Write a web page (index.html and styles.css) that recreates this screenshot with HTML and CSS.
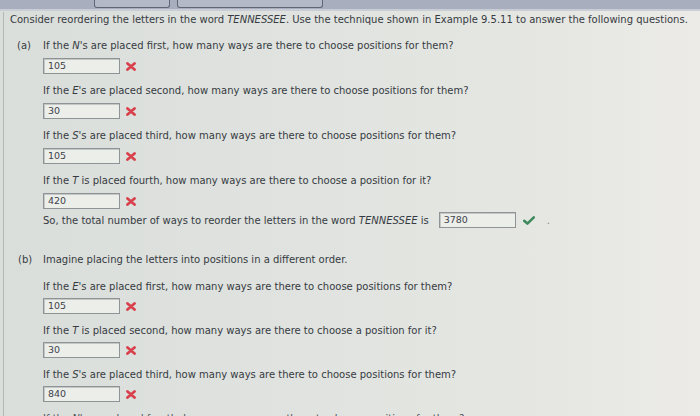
FILE: index.html
```html
<!DOCTYPE html>
<html>
<head>
<meta charset="utf-8">
<link rel="stylesheet" href="styles.css">
</head>
<body>
<div class="topbar"><span class="tbtn tb1"></span><span class="tbtn tb2"></span></div>
<div class="page">
  <p class="intro">Consider reordering the letters in the word <i>TENNESSEE</i>. Use the technique shown in Example 9.5.11 to answer the following questions.</p>

  <div class="part part-a">
    <span class="label">(a)</span>
    <div class="body">
      <p class="qt first">If the <i>N</i>'s are placed first, how many ways are there to choose positions for them?</p>
      <div class="ans"><span class="box">105</span><svg class="x" viewBox="0 0 10 9"><path d="M1.5 1.5 L8.5 7.5 M8.5 1.5 L1.5 7.5"/></svg></div>
      <p class="qt">If the <i>E</i>'s are placed second, how many ways are there to choose positions for them?</p>
      <div class="ans"><span class="box">30</span><svg class="x" viewBox="0 0 10 9"><path d="M1.5 1.5 L8.5 7.5 M8.5 1.5 L1.5 7.5"/></svg></div>
      <p class="qt">If the <i>S</i>'s are placed third, how many ways are there to choose positions for them?</p>
      <div class="ans"><span class="box">105</span><svg class="x" viewBox="0 0 10 9"><path d="M1.5 1.5 L8.5 7.5 M8.5 1.5 L1.5 7.5"/></svg></div>
      <p class="qt">If the <i>T</i> is placed fourth, how many ways are there to choose a position for it?</p>
      <div class="ans"><span class="box">420</span><svg class="x" viewBox="0 0 10 9"><path d="M1.5 1.5 L8.5 7.5 M8.5 1.5 L1.5 7.5"/></svg></div>
      <div class="total"><span>So, the total number of ways to reorder the letters in the word <i>TENNESSEE</i> is</span><span class="box">3780</span><svg class="check" viewBox="0 0 12 9"><path d="M1.2 4.8 L4.4 7.6 L10.8 1.4"/></svg><span class="dot">.</span></div>
    </div>
  </div>

  <div class="part part-b">
    <span class="label">(b)</span>
    <div class="body">
      <p class="qt first">Imagine placing the letters into positions in a different order.</p>
      <p class="qt sub">If the <i>E</i>'s are placed first, how many ways are there to choose positions for them?</p>
      <div class="ans"><span class="box">105</span><svg class="x" viewBox="0 0 10 9"><path d="M1.5 1.5 L8.5 7.5 M8.5 1.5 L1.5 7.5"/></svg></div>
      <p class="qt">If the <i>T</i> is placed second, how many ways are there to choose a position for it?</p>
      <div class="ans"><span class="box">30</span><svg class="x" viewBox="0 0 10 9"><path d="M1.5 1.5 L8.5 7.5 M8.5 1.5 L1.5 7.5"/></svg></div>
      <p class="qt">If the <i>S</i>'s are placed third, how many ways are there to choose positions for them?</p>
      <div class="ans"><span class="box">840</span><svg class="x" viewBox="0 0 10 9"><path d="M1.5 1.5 L8.5 7.5 M8.5 1.5 L1.5 7.5"/></svg></div>
      <p class="qt faded">If the <i>N</i>'s are placed fourth, how many ways are there to choose positions for them?</p>
    </div>
  </div>
</div>
</body>
</html>
```
FILE: styles.css
```css
html, body {
  margin: 0;
  padding: 0;
}
body {
  width: 700px;
  height: 416px;
  overflow: hidden;
  font-family: "DejaVu Sans", Verdana, sans-serif;
  font-size: 10px;
  color: #363b42;
  background: linear-gradient(to right, #dadeda 0%, #e0e3df 45%, #e6e7e3 80%, #ecebe7 100%);
}
.topbar {
  height: 9px;
  background: #a8aebd;
  border-bottom: 2px solid #c9ced6;
  display: flex;
  gap: 7px;
  padding-left: 94px;
}
.tbtn {
  display: block;
  height: 7px;
  border: 1px solid #5f6675;
  border-top: none;
  border-radius: 0 0 3px 3px;
  background: #b3b9c7;
}
.tb1 { width: 74px; }
.tb2 { width: 144px; }
.page {
  border-left: 1px solid #b4b8b4;
  margin-left: 3px;
  padding-left: 6px;
}
p { margin: 0; }
.intro {
  margin-top: 1px;
  line-height: 16px;
  white-space: nowrap;
}
.part {
  display: flex;
}
.part-a { margin-top: 10px; }
.part-b { margin-top: 24px; }
.label {
  width: 33px;
  padding-left: 7px;
  box-sizing: border-box;
  line-height: 16px;
  flex: none;
}
.part-b .label { padding-left: 8px; }
.body {
  display: flex;
  flex-direction: column;
}
.qt {
  line-height: 16px;
  white-space: nowrap;
  margin-top: 9px;
}
.part-b .qt { margin-top: 9px; }
.qt.first, .part-b .qt.first { margin-top: 0; }
.part-b .qt.sub { margin-top: 11px; }
.ans {
  margin-top: 4px;
  height: 16px;
  display: flex;
  align-items: center;
}
.part-b .ans { margin-top: 3px; }
.box {
  display: inline-block;
  box-sizing: border-box;
  width: 77px;
  height: 16px;
  border: 1px solid #8e9395;
  box-shadow: inset 1px 1px 0 #c4c7c5;
  background: #eceeea;
  font-size: 9.5px;
  line-height: 14px;
  padding-left: 4px;
  color: #3e434a;
}
.x {
  width: 10px;
  height: 9px;
  margin-left: 6px;
  fill: none;
  stroke: #d8414c;
  stroke-width: 2.8;
  stroke-linecap: round;
}
.total {
  margin-top: 3px;
  height: 16px;
  display: flex;
  align-items: center;
  white-space: nowrap;
}
.total .box { margin-left: 10px; }
.check {
  width: 12px;
  height: 9px;
  margin-left: 7px;
  fill: none;
  stroke: #3e8a5c;
  stroke-width: 2.6;
  stroke-linecap: round;
  stroke-linejoin: round;
}
.dot {
  margin-left: 12px;
  color: #888;
}
.faded {
  color: #4a4f55;
}
```
